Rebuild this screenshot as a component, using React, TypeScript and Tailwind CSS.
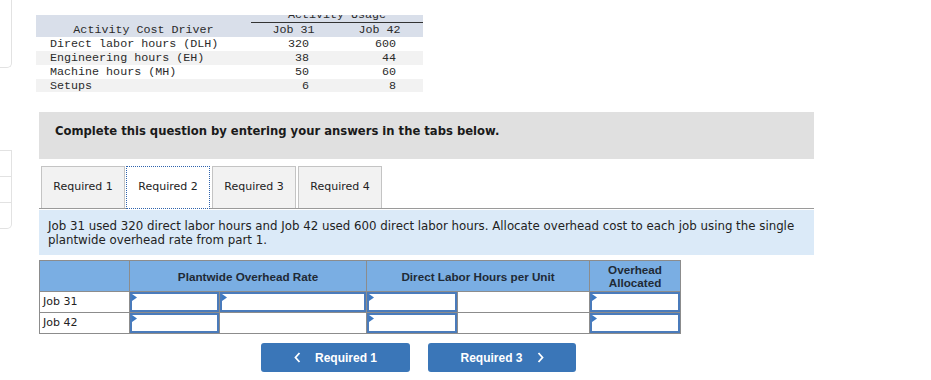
import React from "react";

const rows: [string, string, string][] = [
  ["Direct labor hours (DLH)", "320", "600"],
  ["Engineering hours (EH)", "38", "44"],
  ["Machine hours (MH)", "50", "60"],
  ["Setups", "6", "8"],
];

function Marker() {
  return (
    <svg width="5" height="7" viewBox="0 0 5 7" className="absolute left-0 top-0">
      <path d="M0 0 L5 3.5 L0 7 Z" fill="#3d79c2" />
    </svg>
  );
}

function InputCell({ marker = true }: { marker?: boolean }) {
  return (
    <td className="p-0 border border-[#8c8c8c] h-[20px]">
      <div className="relative h-[20px] border-2 border-[#4a7bbb] bg-white">{marker && <Marker />}</div>
    </td>
  );
}

function PlainCell() {
  return <td className="p-0 border border-[#8c8c8c] h-[20px] bg-white" />;
}

export default function App() {
  const mono = "font-['Liberation_Mono',monospace]";
  const sans = "font-['DejaVu_Sans',sans-serif]";
  const arial = "font-['Liberation_Sans',Arial,sans-serif]";
  return (
    <div className="w-[931px] h-[380px] bg-white flex overflow-hidden">
      <div className="w-[12px] shrink-0">
        <div className="h-[68px] border-r border-b border-[#e2e2e2] rounded-br-[5px]" />
        <div className="mt-[82px] border-t border-r border-b border-[#e2e2e2] rounded-br-[5px]">
          <div className="h-[26px] border-b border-[#e2e2e2]" />
          <div className="h-[26px] border-b border-[#e2e2e2]" />
          <div className="h-[25px]" />
        </div>
      </div>

      <div className="flex-1 flex flex-col">
        {/* top data table */}
        <div className="mt-[15px] ml-[24px] w-[387px] h-[77px] overflow-hidden">
          <table className={`-mt-[7px] w-[387px] border-collapse text-[11.7px] leading-[14px] text-[#2b2b2b] ${mono}`}>
            <thead>
              <tr className="bg-[#d9dfea]">
                <th className="w-[215px] h-[14px] p-0"></th>
                <th colSpan={2} className="p-0 h-[14px] font-normal text-center border-b border-[#333]">
                  Activity Usage
                </th>
              </tr>
              <tr className="bg-[#d9dfea]">
                <th className="w-[215px] h-[14px] p-0 font-normal text-center">Activity Cost Driver</th>
                <th className="w-[85px] p-0 font-normal text-center">Job 31</th>
                <th className="w-[87px] p-0 font-normal text-center">Job 42</th>
              </tr>
            </thead>
            <tbody>
              {rows.map((r, i) => (
                <tr key={r[0]} className={i % 2 === 1 ? "bg-[#f2f2f2]" : "bg-white"}>
                  <td className="h-[14px] p-0 pl-[14px] whitespace-pre">{r[0]}</td>
                  <td className="p-0 pr-[27px] text-right">{r[1]}</td>
                  <td className="p-0 pr-[27px] text-right">{r[2]}</td>
                </tr>
              ))}
            </tbody>
          </table>
        </div>

        {/* instruction box */}
        <div className={`mt-[20px] ml-[27px] w-[775px] h-[47px] bg-[#e0e0e0] pl-[16px] pt-[11px] ${sans}`}>
          <div className="text-[11.6px] leading-[16px] font-bold text-[#1a1a1a]">
            Complete this question by entering your answers in the tabs below.
          </div>
        </div>

        {/* tabs */}
        <div className={`mt-[7px] ml-[27px] w-[775px] flex border-b border-[#9a9a9a] ${sans}`}>
          {["Required 1", "Required 2", "Required 3", "Required 4"].map((t, i) => {
            const active = i === 1;
            const ml = i === 0 ? "ml-[2px]" : i === 1 ? "ml-[1px]" : "ml-[2px]";
            return (
              <div
                key={t}
                className={`${ml} w-[84px] h-[42px] flex items-center justify-center text-[11px] text-[#222] ${
                  active
                    ? "bg-white border border-dotted border-[#2f63ad] -mb-[1px] h-[43px]"
                    : "bg-[#f2f2f2] border border-b-0 border-[#c4c4c4]"
                }`}
              >
                {t}
              </div>
            );
          })}
        </div>

        {/* info box */}
        <div className={`mt-[1px] ml-[27px] w-[775px] h-[45px] bg-[#dbeaf8] px-[9px] pt-[9px] text-[11.8px] leading-[14px] text-[#222] ${sans}`}>
          Job 31 used 320 direct labor hours and Job 42 used 600 direct labor hours. Allocate overhead cost to each job using the single plantwide overhead rate from part 1.
        </div>

        {/* answer table */}
        <table className={`mt-[5px] ml-[27px] w-[641px] border-collapse table-fixed border border-[#8c8c8c]`}>
          <colgroup>
            <col className="w-[90px]" />
            <col className="w-[90px]" />
            <col className="w-[147px]" />
            <col className="w-[91px]" />
            <col className="w-[132px]" />
            <col className="w-[91px]" />
          </colgroup>
          <thead>
            <tr className={`bg-[#7aaee3] h-[31px] text-[11.7px] leading-[13px] font-bold text-[#1f2a36] ${arial}`}>
              <th className="border border-[#8c8c8c] p-0"></th>
              <th colSpan={2} className="border border-[#8c8c8c] p-0 text-center">Plantwide Overhead Rate</th>
              <th colSpan={2} className="border border-[#8c8c8c] p-0 text-center">Direct Labor Hours per Unit</th>
              <th className="border border-[#8c8c8c] p-0 text-center">
                Overhead
                <br />
                Allocated
              </th>
            </tr>
          </thead>
          <tbody>
            <tr>
              <td className={`border border-[#8c8c8c] h-[20px] p-0 pl-[3px] text-[11px] text-[#222] ${sans}`}>Job 31</td>
              <InputCell />
              <InputCell />
              <InputCell />
              <PlainCell />
              <InputCell />
            </tr>
            <tr>
              <td className={`border border-[#8c8c8c] h-[20px] p-0 pl-[3px] text-[11px] text-[#222] ${sans}`}>Job 42</td>
              <InputCell />
              <PlainCell />
              <InputCell />
              <PlainCell />
              <InputCell />
            </tr>
          </tbody>
        </table>

        {/* nav buttons */}
        <div className={`mt-[9px] ml-[249px] flex gap-[18px] ${arial}`}>
          <div className="w-[149px] h-[29px] bg-[#3a76b8] rounded-[3px] flex items-center justify-center gap-[14px] text-white text-[12px] font-bold">
            <svg width="7" height="11" viewBox="0 0 7 11">
              <path d="M5.5 1 L1.5 5.5 L5.5 10" stroke="white" strokeWidth="1.8" fill="none" />
            </svg>
            <span>Required 1</span>
          </div>
          <div className="w-[148px] h-[29px] bg-[#3a76b8] rounded-[3px] flex items-center justify-center gap-[14px] text-white text-[12px] font-bold">
            <span>Required 3</span>
            <svg width="7" height="11" viewBox="0 0 7 11">
              <path d="M1.5 1 L5.5 5.5 L1.5 10" stroke="white" strokeWidth="1.8" fill="none" />
            </svg>
          </div>
        </div>
      </div>
    </div>
  );
}
